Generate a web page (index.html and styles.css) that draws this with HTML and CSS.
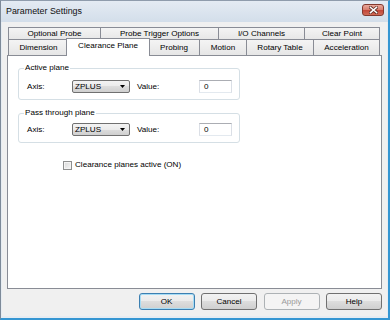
FILE: index.html
```html
<!DOCTYPE html>
<html>
<head>
<meta charset="utf-8">
<title>Parameter Settings</title>
<link rel="stylesheet" href="styles.css">
</head>
<body>
<div class="window">
  <div class="titlebar">
    <span class="title">Parameter Settings</span>
    <button class="close" aria-label="Close">
      <svg width="9" height="8" viewBox="0 0 9 8"><path d="M1.5 1.5 L7.5 6.5 M7.5 1.5 L1.5 6.5" stroke="#5a2a22" stroke-width="3" stroke-linecap="square"/><path d="M1.5 1.5 L7.5 6.5 M7.5 1.5 L1.5 6.5" stroke="#ffffff" stroke-width="1.6" stroke-linecap="square"/></svg>
    </button>
  </div>
  <div class="client">
    <div class="tabs">
      <div class="tabrow row1">
        <div class="tab">Optional Probe</div>
        <div class="tab">Probe Trigger Options</div>
        <div class="tab">I/O Channels</div>
        <div class="tab">Clear Point</div>
      </div>
      <div class="tabrow row2">
        <div class="tab">Dimension</div>
        <div class="tab selected">Clearance Plane</div>
        <div class="tab">Probing</div>
        <div class="tab">Motion</div>
        <div class="tab">Rotary Table</div>
        <div class="tab">Acceleration</div>
      </div>
    </div>
    <div class="panel">
      <fieldset class="group group-active">
        <legend>Active plane</legend>
        <div class="field-row">
          <span class="lbl-axis">Axis:</span>
          <div class="combo"><span>ZPLUS</span><svg class="arrow" width="5" height="3" viewBox="0 0 5 3"><path d="M0 0 H5 L2.5 3 Z" fill="#000"/></svg></div>
          <span class="lbl-value">Value:</span>
          <div class="input">0</div>
        </div>
      </fieldset>
      <fieldset class="group group-pass">
        <legend>Pass through plane</legend>
        <div class="field-row">
          <span class="lbl-axis">Axis:</span>
          <div class="combo"><span>ZPLUS</span><svg class="arrow" width="5" height="3" viewBox="0 0 5 3"><path d="M0 0 H5 L2.5 3 Z" fill="#000"/></svg></div>
          <span class="lbl-value">Value:</span>
          <div class="input">0</div>
        </div>
      </fieldset>
      <label class="check"><span class="box"></span><span>Clearance planes active (ON)</span></label>
    </div>
    <div class="buttons">
      <button class="btn default">OK</button>
      <button class="btn">Cancel</button>
      <button class="btn disabled">Apply</button>
      <button class="btn">Help</button>
    </div>
  </div>
</div>
</body>
</html>
```
FILE: styles.css
```css
* { box-sizing: border-box; }
html, body { margin: 0; padding: 0; }
body {
  width: 390px;
  height: 320px;
  overflow: hidden;
  background: #ffffff;
  font-family: "Liberation Sans", Arial, sans-serif;
  font-size: 8.1px;
  color: #000;
}
.window {
  width: 390px;
  height: 320px;
  display: flex;
  flex-direction: column;
  background: #e6ecf2;
  border-left: 1px solid #7d8a99;
  border-top: 1px solid #8f9cac;
  border-right: 2px solid #3596d2;
  border-bottom: 2px solid #3596d2;
}
.titlebar {
  height: 21px;
  display: flex;
  align-items: flex-start;
  justify-content: space-between;
  background: linear-gradient(#e4ebf3, #d3deea);
}
.title {
  font-size: 8.9px;
  line-height: 10px;
  margin: 5px 0 0 5px;
  color: #111;
}
.close {
  width: 22px;
  height: 12px;
  margin: 3px 4px 0 0;
  padding: 0;
  border: 1px solid #83392e;
  border-radius: 3px;
  background: linear-gradient(#e9a99c 0%, #d98070 45%, #c4483a 55%, #cf6a56 100%);
  display: flex;
  align-items: center;
  justify-content: center;
}
.close svg { display: block; }
.client {
  flex: 1;
  margin: 0 1px 2px 1px;
  padding: 5px 5px 0 5px;
  background: #f0f0f0;
  display: flex;
  flex-direction: column;
}
.tabs {
  margin: 0 2px 0 1px;
}
.tabrow {
  display: grid;
}
.row1 {
  grid-template-columns: 92px 118px 86px 76px;
  grid-auto-rows: 13px;
}
.row2 {
  grid-template-columns: 60px 80px 51px 47px 67px 67px;
  grid-auto-rows: 16px;
  margin-top: -1px;
}
.tab {
  border-top: 1px solid #898c95;
  border-left: 1px solid #898c95;
  background: linear-gradient(#f4f4f4, #e6e6e6);
  text-align: center;
  white-space: nowrap;
}
.tab:last-child { border-right: 1px solid #898c95; }
.row1 .tab { line-height: 11px; }
.row2 .tab { line-height: 15px; }
.row2 .tab.selected {
  position: relative;
  z-index: 1;
  margin: -1px -2px -1px -2px;
  border-right: 1px solid #898c95;
  background: #ffffff;
  line-height: 14px;
}
.row2 .tab.selected + .tab { border-left-color: #898c95; }
.panel {
  height: 234px;
  border: 1px solid #898c95;
  background: #ffffff;
  padding: 7px 0 0 10px;
  display: flex;
  flex-direction: column;
  align-items: flex-start;
}
.group {
  width: 222px;
  margin: 0;
  padding: 6px 7px 6px 8px;
  border: 1px solid #d5dfe5;
  border-radius: 3px;
}
.group legend {
  padding: 0 1px;
  margin-left: -3px;
  line-height: 10px;
}
.group-pass {
  margin-top: 8px;
  padding-top: 4px;
  padding-bottom: 6px;
}
.field-row {
  display: flex;
  align-items: center;
  height: 14px;
}
.lbl-axis { width: 45px; }
.combo {
  width: 58px;
  height: 13px;
  border: 1px solid #707070;
  border-radius: 2px;
  background: linear-gradient(#f3f3f3 0%, #ebebeb 50%, #dddddd 50%, #cfcfcf 100%);
  display: flex;
  align-items: center;
  justify-content: space-between;
  padding: 0 4px 0 2px;
  line-height: 11px;
}
.arrow { display: block; }
.lbl-value { width: 62px; margin-left: 7px; }
.input {
  width: 33px;
  height: 13px;
  border: 1px solid #abadb3;
  border-left-color: #dbdfe6;
  border-right-color: #dbdfe6;
  border-bottom-color: #e3e9ef;
  background: #fff;
  padding-left: 4px;
  line-height: 11px;
}
.check {
  margin: 17px 0 0 45px;
  display: flex;
  align-items: center;
  gap: 3px;
  line-height: 10px;
}
.box {
  width: 9px;
  height: 9px;
  border: 1px solid #8e8f8f;
  background: linear-gradient(135deg, #d8d8d8, #f6f6f6);
  box-shadow: inset 0 0 0 1px #f4f4f4;
}
.buttons {
  display: flex;
  justify-content: flex-end;
  gap: 6.5px;
  margin-top: 4px;
  margin-right: 0;
}
.btn {
  width: 56px;
  height: 17px;
  padding: 0;
  border: 1px solid #707070;
  border-radius: 3px;
  background: linear-gradient(#f2f2f2 0%, #ebebeb 45%, #dddddd 50%, #cfcfcf 100%);
  font-family: "Liberation Sans", Arial, sans-serif;
  font-size: 8.1px;
  color: #000;
}
.btn.default {
  border-color: #3c7fb1;
  box-shadow: inset 0 0 0 1px #a6dcf5;
}
.btn.disabled {
  border-color: #adb2b5;
  background: #f4f4f4;
  color: #9a9a9a;
}
```
